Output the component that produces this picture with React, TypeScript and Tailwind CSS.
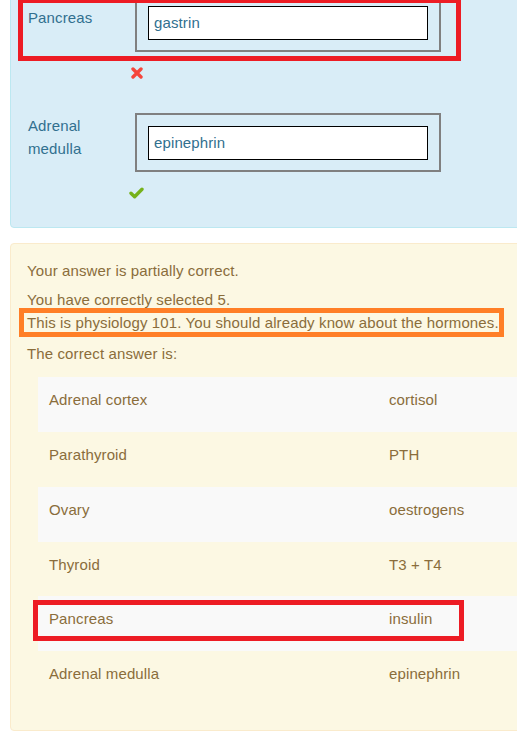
import React from "react";

function CrossIcon() {
  return (
    <svg width="12" height="12" viewBox="0 0 12 12" className="block">
      <path d="M2 2 L10 10 M10 2 L2 10" stroke="#f5463c" strokeWidth="3.4" strokeLinecap="round" fill="none" />
    </svg>
  );
}

function CheckIcon() {
  return (
    <svg width="15" height="12" viewBox="0 0 15 12" className="block">
      <path d="M2 6.3 L5.6 9.8 L13 2.2" stroke="#76b21b" strokeWidth="3.4" strokeLinecap="round" strokeLinejoin="round" fill="none" />
    </svg>
  );
}

const rows: [string, string][] = [
  ["Adrenal cortex", "cortisol"],
  ["Parathyroid", "PTH"],
  ["Ovary", "oestrogens"],
  ["Thyroid", "T3 + T4"],
  ["Pancreas", "insulin"],
  ["Adrenal medulla", "epinephrin"],
];

export default function App() {
  return (
    <div className="w-[517px] h-[743px] overflow-hidden bg-white font-['Liberation_Sans',Arial,sans-serif] text-[15px] leading-[22.5px] tracking-[0.12px]">
      {/* Blue panel */}
      <div className="-mt-[20px] ml-[10px] w-[560px] rounded-[4px] border border-[#bce8f1] bg-[#d9edf7] pl-[17px] pt-[12.3px] pb-[28px] text-[#31708f]">
        {/* Row 1 */}
        <div className="relative flex">
          <div className="w-[107px] pt-[13.3px]">Pancreas</div>
          <div className="flex flex-col">
            <div className="h-[58.4px] w-[306px] border-2 border-[#808080] p-[11px]">
              <input
                readOnly
                value="gastrin"
                className="block h-[34px] w-[280px] border border-black bg-white px-[5px] pb-[1px] text-[15px] tracking-[0.12px] text-[#31708f] outline-none"
              />
            </div>
            <div className="mt-[15px] -ml-[4px]">
              <CrossIcon />
            </div>
          </div>
          <div className="pointer-events-none absolute -left-[10px] top-[4.4px] h-[63.3px] w-[443px] border-[5px] border-[#ed1c24]" />
        </div>
        {/* Row 2 */}
        <div className="mt-[34.6px] flex">
          <div className="w-[107px] pr-[10px] pt-[2px]">Adrenal medulla</div>
          <div className="flex flex-col">
            <div className="h-[58.4px] w-[306px] border-2 border-[#808080] p-[11px]">
              <input
                readOnly
                value="epinephrin"
                className="block h-[34px] w-[280px] border border-black bg-white px-[5px] pb-[1px] text-[15px] tracking-[0.12px] text-[#31708f] outline-none"
              />
            </div>
            <div className="mt-[15px] -ml-[5.7px]">
              <CheckIcon />
            </div>
          </div>
        </div>
      </div>

      {/* Yellow feedback panel */}
      <div className="mt-[15.3px] ml-[10px] w-[560px] rounded-[4px] border border-[#faebcc] bg-[#fcf8e3] pl-[16px] pt-[16px] pb-[23.6px] text-[#8a6d3b]">
        <p>Your answer is partially correct.</p>
        <p className="mt-[6.8px]">You have correctly selected 5.</p>
        <div className="relative">
          <p>This is physiology 101. You should already know about the hormones.</p>
          <div className="pointer-events-none absolute -left-[8px] -top-[3.7px] h-[29.4px] w-[485px] border-[5px] border-[#ff7f27]" />
        </div>
        <p className="mt-[8.8px]">The correct answer is:</p>
        <div className="ml-[11px] mt-[11.5px] flex flex-col">
          {rows.map(([a, b], i) => (
            <div
              key={a}
              className={`relative flex h-[54.85px] pt-[12px] ${i % 2 === 0 ? "bg-[#f9f9f9]" : ""}`}
            >
              <div className="w-[351px] pl-[11px]">{a}</div>
              <div className="flex-1">{b}</div>
              {a === "Pancreas" ? (
                <div className="pointer-events-none absolute -left-[5px] top-[4px] h-[41px] w-[431px] border-[5px] border-[#ed1c24]" />
              ) : null}
            </div>
          ))}
        </div>
      </div>
    </div>
  );
}
